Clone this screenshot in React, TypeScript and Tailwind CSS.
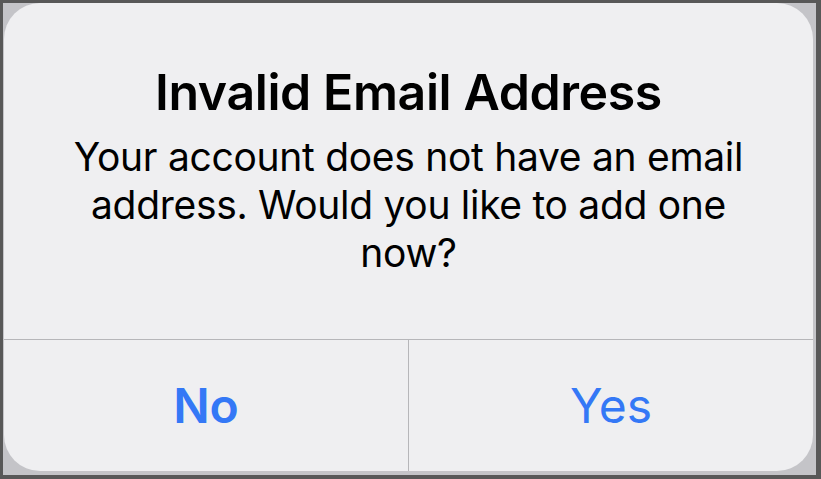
const App = () => {
    return (
        <div className="w-[821px] h-[479px] bg-[#585858] pt-[3px] pl-[3px] pr-[5px] pb-[4px] font-['Inter','Liberation_Sans',sans-serif]">
            {/* backdrop peeking round the alert */}
            <div className="w-full h-full bg-[#c4c4c8] pl-[1px] pr-[3px] pb-[4px]">
                <div className="flex flex-col w-full h-full bg-[#efeff1] rounded-[36px] overflow-hidden text-black">
                    <div className="flex flex-col items-center pt-[59px] h-[336px]">
                        <h1 className="text-[50px] leading-[60px] font-semibold tracking-[-0.4px]">
                            Invalid Email Address
                        </h1>
                        <p className="mt-[11px] text-[39px] leading-[48px] text-center tracking-[-0.3px]">
                            Your account does not have an email
                            <br />
                            address. Would you like to add one
                            <br />
                            now?
                        </p>
                    </div>
                    <div className="flex flex-1 border-t border-[#b6b6b9]">
                        <button className="flex-1 flex items-center justify-center text-[48px] font-semibold text-[#3478f6] border-r border-[#b6b6b9]">
                            No
                        </button>
                        <button className="flex-1 flex items-center justify-center text-[48px] text-[#3478f6]">
                            Yes
                        </button>
                    </div>
                </div>
            </div>
        </div>
    );
};

export default App;
